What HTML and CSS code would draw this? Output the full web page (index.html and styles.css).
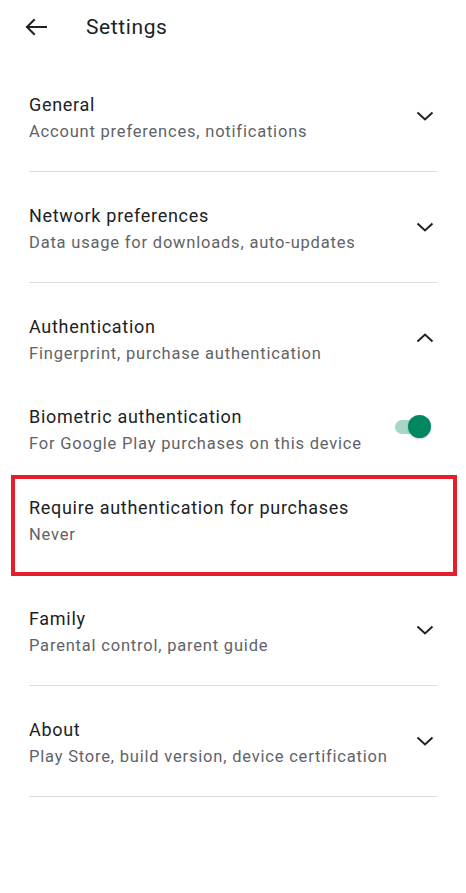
FILE: index.html
```html
<!DOCTYPE html>
<html>
<head>
<meta charset="utf-8">
<link rel="stylesheet" href="styles.css">
</head>
<body>
<div class="app">
  <header class="topbar">
    <svg class="back" width="24" height="20" viewBox="0 0 24 20">
      <path d="M23 10H4M11 3L4 10l7 7" fill="none" stroke="#202124" stroke-width="2" stroke-linecap="square"/>
    </svg>
    <h1 class="title">Settings</h1>
  </header>
  <main class="list">
    <section class="section">
      <div class="row">
        <div class="text"><div class="t">General</div><div class="s">Account preferences, notifications</div></div>
        <svg class="chev" width="24" height="24" viewBox="0 0 24 24"><path d="M4.5 8.5L12 15.5l7.5-7" fill="none" stroke="#202124" stroke-width="2"/></svg>
      </div>
    </section>
    <section class="section">
      <div class="row">
        <div class="text"><div class="t">Network preferences</div><div class="s">Data usage for downloads, auto-updates</div></div>
        <svg class="chev" width="24" height="24" viewBox="0 0 24 24"><path d="M4.5 8.5L12 15.5l7.5-7" fill="none" stroke="#202124" stroke-width="2"/></svg>
      </div>
    </section>
    <section class="section auth">
      <div class="row">
        <div class="text"><div class="t">Authentication</div><div class="s">Fingerprint, purchase authentication</div></div>
        <svg class="chev" width="24" height="24" viewBox="0 0 24 24"><path d="M4.5 15.5L12 8.5l7.5 7" fill="none" stroke="#202124" stroke-width="2"/></svg>
      </div>
      <div class="row">
        <div class="text"><div class="t">Biometric authentication</div><div class="s">For Google Play purchases on this device</div></div>
        <div class="switch"><span class="track"></span><span class="thumb"></span></div>
      </div>
      <div class="row marked">
        <div class="text"><div class="t">Require authentication for purchases</div><div class="s">Never</div></div>
      </div>
    </section>
    <section class="section">
      <div class="row">
        <div class="text"><div class="t">Family</div><div class="s">Parental control, parent guide</div></div>
        <svg class="chev" width="24" height="24" viewBox="0 0 24 24"><path d="M4.5 8.5L12 15.5l7.5-7" fill="none" stroke="#202124" stroke-width="2"/></svg>
      </div>
    </section>
    <section class="section">
      <div class="row">
        <div class="text"><div class="t">About</div><div class="s">Play Store, build version, device certification</div></div>
        <svg class="chev" width="24" height="24" viewBox="0 0 24 24"><path d="M4.5 8.5L12 15.5l7.5-7" fill="none" stroke="#202124" stroke-width="2"/></svg>
      </div>
    </section>
  </main>
</div>
</body>
</html>
```
FILE: styles.css
```css
* { box-sizing: border-box; }
html, body { margin: 0; padding: 0; background: #fff; }
body { font-family: Roboto, "Noto Sans", "Liberation Sans", sans-serif; color: #202124; }
.app { width: 466px; min-height: 893px; background: #fff; }
.topbar { height: 61px; display: flex; align-items: center; padding-left: 23px; padding-bottom: 7px; }
.back { display: block; }
.title { margin: 0 0 0 39px; font-size: 21px; font-weight: 400; letter-spacing: 0.6px; color: #202124; }
.list { padding: 0 29px; }
.section { padding: 30px 0 26px; border-bottom: 1px solid #dadce0; display: flex; flex-direction: column; gap: 36px; }
.row { display: flex; align-items: center; justify-content: space-between; position: relative; }
.text { display: flex; flex-direction: column; padding-top: 1px; }
.t { font-size: 18px; line-height: 26px; color: #202124; letter-spacing: 0.7px; }
.s { font-size: 16.5px; line-height: 27px; color: #5f6368; letter-spacing: 0.8px; }
.chev { display: block; margin-bottom: 4px; }
.switch { position: relative; width: 40px; height: 24px; margin-right: 4px; margin-bottom: 6px; }
.track { position: absolute; left: 2px; top: 5px; width: 34px; height: 14px; border-radius: 7px; background: #a8d6c4; }
.thumb { position: absolute; left: 15px; top: 0; width: 23px; height: 23px; border-radius: 50%; background: #01875f; box-shadow: 0 1px 2px rgba(0,0,0,0.2); }
.marked::after { content: ""; position: absolute; left: -18px; right: -20px; top: -19px; bottom: -28px; border: 4.5px solid #e61e2b; }
.auth .row + .row.marked { margin-top: 1px; }
```
